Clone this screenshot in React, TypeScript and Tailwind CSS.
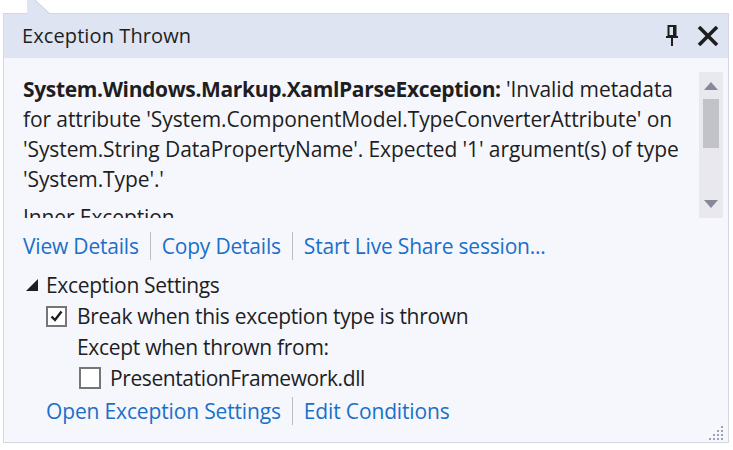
import React from "react";

const font = { fontFamily: '"Open Sans", "Liberation Sans", sans-serif' };

function Pin() {
  return (
    <svg width="14" height="22" viewBox="0 0 14 22" className="block">
      <rect x="3.5" y="1" width="7" height="10" fill="none" stroke="#1e1e1e" strokeWidth="2" />
      <rect x="1" y="11" width="12" height="2" fill="#1e1e1e" />
      <rect x="6" y="13" width="2" height="8" fill="#1e1e1e" />
      <rect x="8" y="2" width="2" height="9" fill="#1e1e1e" />
    </svg>
  );
}

function CloseX() {
  return (
    <svg width="22" height="20" viewBox="0 0 22 20" className="block">
      <path d="M2 1 L20 19 M20 1 L2 19" stroke="#1e1e1e" strokeWidth="3.6" />
    </svg>
  );
}

function Grip() {
  const dots: [number, number][] = [];
  for (let r = 0; r < 4; r++) {
    for (let c = 3 - r; c < 4; c++) {
      dots.push([c * 4, r * 4]);
    }
  }
  return (
    <svg width="16" height="16" viewBox="0 0 16 16" className="block">
      {dots.map(([x, y], i) => (
        <rect key={i} x={x} y={y} width="2" height="2" fill="#9aa2b8" />
      ))}
    </svg>
  );
}

function Sep() {
  return <span className="mx-[11px] inline-block h-[28px] w-px bg-[#b8bcc7]" />;
}

export default function App() {
  return (
    <div className="relative h-[450px] w-[733px] overflow-hidden bg-white text-[#1e1e1e]" style={font}>
      <svg className="absolute left-0 top-0" width="60" height="15" viewBox="0 0 60 15">
        <path d="M27 0 L35 0 L50 14 L27 14 Z" fill="#dfe4f2" />
        <path d="M35 0 L50 14" stroke="#c9cedb" strokeWidth="1" fill="none" />
      </svg>
      <div className="ml-[3px] mt-[13px] flex h-[430px] w-[726px] flex-col border border-[#d3d7e0] bg-[#f5f7fd]">
        <div className="flex h-[44px] shrink-0 items-center bg-[#dfe4f2] pl-[18px] pr-[9px]">
          <span className="text-[20px] tracking-[0.1px]">Exception Thrown</span>
          <div className="ml-auto flex items-center gap-[18px]">
            <Pin />
            <CloseX />
          </div>
        </div>
        <div className="mt-[14px] flex h-[146px] shrink-0 pl-[19px] pr-[5px]">
          <div className="h-full flex-1 overflow-hidden text-[21px] leading-[30px] tracking-[-0.1px] whitespace-nowrap">
            <div className="pt-[2px]">
              <span className="font-bold tracking-[-0.35px]">System.Windows.Markup.XamlParseException:</span> 'Invalid metadata
            </div>
            <div>for attribute 'System.ComponentModel.TypeConverterAttribute' on</div>
            <div>'System.String DataPropertyName'. Expected '1' argument(s) of type</div>
            <div>'System.Type'.'</div>
            <div className="mt-[8px]">Inner Exception</div>
          </div>
          <div className="flex h-full w-[24px] flex-col items-center bg-[#e8e8ee]">
            <svg width="16" height="10" viewBox="0 0 16 10" className="mt-[9px] block">
              <path d="M1 9 L8 1 L15 9 Z" fill="#868999" />
            </svg>
            <div className="mt-[8px] h-[49px] w-[16px] bg-[#c2c3c9]" />
            <svg width="16" height="10" viewBox="0 0 16 10" className="mt-auto mb-[9px] block">
              <path d="M1 1 L8 9 L15 1 Z" fill="#868999" />
            </svg>
          </div>
        </div>
        <div className="mt-[13px] flex h-[30px] items-center pl-[19px] text-[21px] leading-[30px] tracking-[-0.2px] text-[#1a6fc9]">
          <span>View Details</span>
          <Sep />
          <span>Copy Details</span>
          <Sep />
          <span>Start Live Share session...</span>
        </div>
        <div className="mt-[9px] flex h-[30px] items-center pl-[21px] text-[21px] leading-[30px] tracking-[-0.3px]">
          <svg width="14" height="14" viewBox="0 0 14 14" className="mr-[7px] block">
            <path d="M13 1 L13 13 L1 13 Z" fill="#1e1e1e" />
          </svg>
          <span>Exception Settings</span>
        </div>
        <div className="mt-[1px] flex h-[30px] items-center pl-[42px] text-[21px] leading-[30px] tracking-[-0.3px]">
          <div className="mr-[10px] flex h-[21px] w-[21px] items-center justify-center border-2 border-[#767676] bg-white">
            <svg width="13" height="12" viewBox="0 0 13 12" className="block">
              <path d="M1.5 6.5 L5 10 L11.5 1.5" stroke="#1e1e1e" strokeWidth="2.4" fill="none" />
            </svg>
          </div>
          <span>Break when this exception type is thrown</span>
        </div>
        <div className="mt-[1px] h-[30px] pl-[73px] text-[21px] leading-[30px] tracking-[-0.3px]">Except when thrown from:</div>
        <div className="mt-[1px] flex h-[30px] items-center pl-[75px] text-[21px] leading-[30px] tracking-[-0.4px]">
          <div className="mr-[9px] h-[22px] w-[22px] border-2 border-[#767676] bg-white" />
          <span>PresentationFramework.dll</span>
        </div>
        <div className="mt-[3px] flex h-[30px] items-center pl-[42px] text-[21px] leading-[30px] tracking-[-0.15px] text-[#1a6fc9]">
          <span>Open Exception Settings</span>
          <Sep />
          <span>Edit Conditions</span>
        </div>
        <div className="mt-auto flex justify-end pb-[3px] pr-[3px]">
          <Grip />
        </div>
      </div>
    </div>
  );
}
